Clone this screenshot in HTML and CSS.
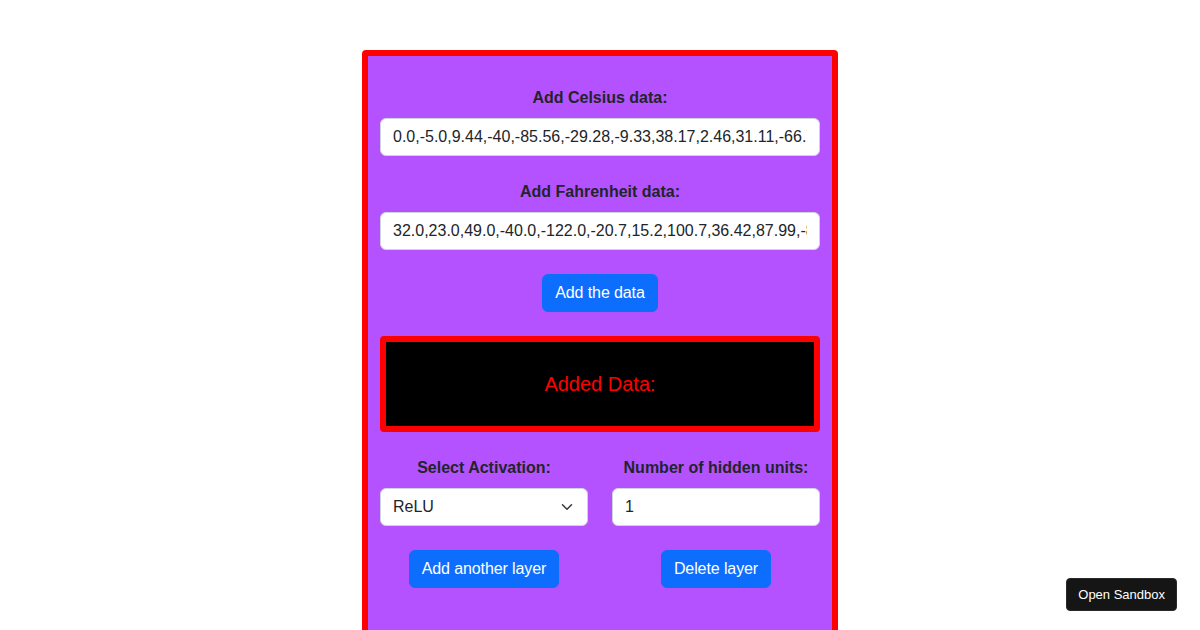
FILE: index.html
```html
<!DOCTYPE html>
<html lang="en">
<head>
<meta charset="utf-8">
<title>Temperature model</title>
<link rel="stylesheet" href="styles.css">
</head>
<body>
<main class="panel">
  <div class="field">
    <label class="label" for="celsius">Add Celsius data:</label>
    <input class="control" id="celsius" type="text" value="0.0,-5.0,9.44,-40,-85.56,-29.28,-9.33,38.17,2.46,31.11,-66.7,12.5,20.0">
  </div>
  <div class="field">
    <label class="label" for="fahr">Add Fahrenheit data:</label>
    <input class="control" id="fahr" type="text" value="32.0,23.0,49.0,-40.0,-122.0,-20.7,15.2,100.7,36.42,87.99,-88.06,54.5,68.0">
  </div>
  <div class="center">
    <button class="btn" type="button">Add the data</button>
  </div>
  <div class="added">Added Data:</div>
  <div class="cols">
    <div class="col">
      <label class="label" for="act">Select Activation:</label>
      <div class="select-wrap">
        <select class="control select" id="act">
          <option>ReLU</option>
          <option>Sigmoid</option>
          <option>Tanh</option>
        </select>
        <svg class="chev" width="16" height="12" viewBox="0 0 16 16"><path d="m2 5 6 6 6-6" fill="none" stroke="#343a40" stroke-width="2" stroke-linecap="round" stroke-linejoin="round"/></svg>
      </div>
      <div class="center btn-row">
        <button class="btn" type="button">Add another layer</button>
      </div>
    </div>
    <div class="col">
      <label class="label" for="units">Number of hidden units:</label>
      <input class="control" id="units" type="text" value="1">
      <div class="center btn-row">
        <button class="btn" type="button">Delete layer</button>
      </div>
    </div>
  </div>
</main>
<button class="sandbox" type="button">Open Sandbox</button>
</body>
</html>
```
FILE: styles.css
```css
* { box-sizing: border-box; }
html, body { margin: 0; padding: 0; background: #fff; }
body {
  font-family: "Liberation Sans", Arial, sans-serif;
  font-size: 16px;
  line-height: 1.5;
  color: #212529;
}
.panel {
  width: 476px;
  margin: 50px auto 0;
  min-height: 640px;
  background: #b452ff;
  border: 6px solid #ff0000;
  border-radius: 4px;
  padding: 30px 12px 40px;
  display: flex;
  flex-direction: column;
  gap: 24px;
}
.field { display: flex; flex-direction: column; }
.label {
  display: block;
  text-align: center;
  font-weight: bold;
  margin-bottom: 8px;
  line-height: 24px;
}
.control {
  display: block;
  width: 100%;
  height: 38px;
  padding: 6px 12px;
  font-family: inherit;
  font-size: 16px;
  line-height: 24px;
  color: #212529;
  background: #fff;
  border: 1px solid #ced4da;
  border-radius: 6px;
  outline: none;
}
.center { display: flex; justify-content: center; }
.btn {
  font-family: inherit;
  font-size: 16px;
  line-height: 24px;
  padding: 6px 12px;
  height: 38px;
  color: #fff;
  background: #0d6efd;
  border: 1px solid #0d6efd;
  border-radius: 6px;
  letter-spacing: -0.1px;
  cursor: pointer;
}
.added {
  height: 96px;
  background: #000;
  border: 6px solid #ff0000;
  border-radius: 4px;
  color: #ff0000;
  font-size: 20px;
  display: flex;
  align-items: center;
  justify-content: center;
}
.cols {
  display: grid;
  grid-template-columns: 1fr 1fr;
  column-gap: 24px;
}
.col { display: flex; flex-direction: column; }
.select-wrap { position: relative; }
.select {
  appearance: none;
  -webkit-appearance: none;
  padding-right: 36px;
}
.chev {
  position: absolute;
  right: 13px;
  top: 13px;
  pointer-events: none;
}
.btn-row { margin-top: 24px; }
.sandbox {
  position: fixed;
  right: 23px;
  bottom: 19px;
  height: 33px;
  padding: 0 11px;
  background: #151515;
  color: #fff;
  border: 1px solid #2a2a2a;
  border-radius: 4px;
  font-family: "Liberation Sans", Arial, sans-serif;
  font-size: 13px;
}
```
